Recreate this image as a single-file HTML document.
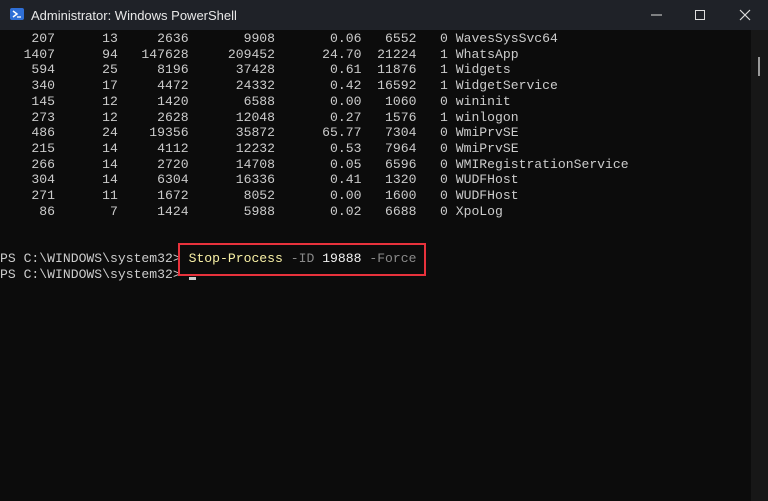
<!DOCTYPE html>
<html><head><style>
body{margin:0;width:768px;height:501px;background:#0c0c0c;overflow:hidden;position:relative;font-family:"Liberation Sans",sans-serif}
#title{position:absolute;left:0;top:0;width:768px;height:30px;background:#1f2228;color:#e8e8e8;font-size:13px}
#title .t{position:absolute;left:31px;top:8px}
#icon{position:absolute;left:10px;top:8px;width:14px;height:12px;background:#2f6fd6;border-radius:2px}
pre{position:absolute;left:0;top:31px;margin:0;font-family:"Liberation Mono",monospace;font-size:13.1px;line-height:15.7px;color:#cccccc}
.y{color:#f9f1a5}.g{color:#8a8a8a}.w{color:#f2f2f2}
#box{position:absolute;left:178px;top:243px;width:248px;height:33px;border:2px solid #e8323c;box-sizing:border-box}
#sb{position:absolute;left:751px;top:30px;width:17px;height:471px;background:#171717}
#thumb{position:absolute;left:758px;top:57px;width:2px;height:19px;background:#9a9a9a}
</style></head><body>
<div id="title"><div id="icon"><svg width="14" height="12"><path d="M3 3l4 3-4 3" stroke="#fff" stroke-width="1.5" fill="none"/><path d="M7 9h4" stroke="#fff" stroke-width="1.3"/></svg></div><span class="t">Administrator: Windows PowerShell</span>
<svg style="position:absolute;left:640px;top:0" width="128" height="30"><path d="M11 15h11" stroke="#ddd" stroke-width="1"/><rect x="55.5" y="10.5" width="9" height="9" stroke="#ddd" fill="none"/><path d="M100 10l10 10M110 10l-10 10" stroke="#ddd" stroke-width="1.2"/></svg></div>
<div id="sb"></div><div id="thumb"></div>
<pre>    207      13     2636       9908       0.06   6552   0 WavesSysSvc64
   1407      94   147628     209452      24.70  21224   1 WhatsApp
    594      25     8196      37428       0.61  11876   1 Widgets
    340      17     4472      24332       0.42  16592   1 WidgetService
    145      12     1420       6588       0.00   1060   0 wininit
    273      12     2628      12048       0.27   1576   1 winlogon
    486      24    19356      35872      65.77   7304   0 WmiPrvSE
    215      14     4112      12232       0.53   7964   0 WmiPrvSE
    266      14     2720      14708       0.05   6596   0 WMIRegistrationService
    304      14     6304      16336       0.41   1320   0 WUDFHost
    271      11     1672       8052       0.00   1600   0 WUDFHost
     86       7     1424       5988       0.02   6688   0 XpoLog


PS C:\WINDOWS\system32&gt; <span class="y">Stop-Process</span> <span class="g">-ID</span> <span class="w">19888</span> <span class="g">-Force</span>
PS C:\WINDOWS\system32&gt; <span style="display:inline-block;width:7px;height:3px;background:#ccc;vertical-align:-2px"></span></pre>
<div id="box"></div>
</body></html>
